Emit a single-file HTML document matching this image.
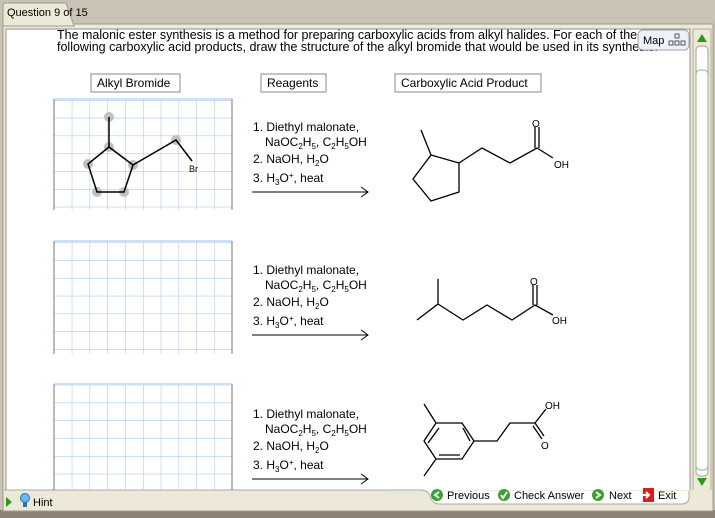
<!DOCTYPE html>
<html><head><meta charset="utf-8">
<style>
html,body{margin:0;padding:0;width:715px;height:518px;overflow:hidden;background:#c9c3b5;}
svg{display:block;font-family:"Liberation Sans",sans-serif;}
</style></head><body>
<svg width="715" height="518" viewBox="0 0 715 518" xmlns="http://www.w3.org/2000/svg">
<defs>
<pattern id="g" x="54" y="100" width="17.8" height="17.8" patternUnits="userSpaceOnUse">
<path d="M0 0H17.8M0 0V17.8" stroke="#9cc0ec" stroke-width="1" fill="none"/>
</pattern>
</defs>
<rect x="0" y="0" width="715" height="518" fill="#c9c3b5"/>
<rect x="0" y="510" width="715" height="8" fill="#8c8374"/>
<rect x="3" y="24" width="710" height="487" fill="#ece9d8" stroke="#a09a8c"/>
<path d="M3 26 V6 Q3 3 6 3 H66 L74 26 Z" fill="#ece9d8" stroke="#a09a8c"/>
<text x="7" y="16" font-size="11" fill="#000">Question 9 of 15</text>
<rect x="6" y="29" width="684" height="462" fill="#fff" stroke="#909090"/>
<rect x="693" y="29" width="18" height="462" fill="#ece9d8" stroke="#b0ac9c"/>
<path d="M697 42 L702 34 L707 42Z" fill="#2a9a1a"/>
<rect x="696" y="46" width="12" height="430" rx="4" fill="#fff" stroke="#a0a0a0"/>
<rect x="696" y="70" width="12" height="400" rx="4" fill="#fff" stroke="#8ab880"/>
<path d="M697 478 L702 486 L707 478Z" fill="#2a9a1a"/>
<rect x="4" y="490" width="708" height="20" fill="#ece9d8"/>
<path d="M4 490 H420 Q428 490 430 496 Q432 504 440 504 H682 Q688 504 689 498 V491" fill="#fff" stroke="#a8a8a8"/>
<path d="M6 497 L12 502 L6 507Z" fill="#2a9a1a"/>
<circle cx="25" cy="498" r="4.5" fill="#6ab8f0" stroke="#3070b0"/>
<rect x="23" y="502" width="4" height="5" fill="#3070b0"/>
<text x="33" y="506" font-size="11">Hint</text>
<circle cx="437" cy="495" r="6" fill="#3aa030"/><path d="M439 492 L435 495 L439 498" stroke="#fff" stroke-width="2" fill="none"/>
<text x="447" y="499" font-size="11">Previous</text>
<circle cx="504" cy="495" r="6" fill="#3aa030"/><path d="M501 495 L503 498 L507 492" stroke="#fff" stroke-width="2" fill="none"/>
<text x="514" y="499" font-size="11">Check Answer</text>
<circle cx="598" cy="495" r="6" fill="#3aa030"/><path d="M596 492 L600 495 L596 498" stroke="#fff" stroke-width="2" fill="none"/>
<text x="609" y="499" font-size="11">Next</text>
<rect x="643" y="488" width="11" height="14" fill="#d02020"/><path d="M641 495 H649 M646 492 L649 495 L646 498" stroke="#fff" stroke-width="2" fill="none"/>
<text x="658" y="499" font-size="11">Exit</text>
<text x="57" y="39" font-size="12.5">The malonic ester synthesis is a method for preparing carboxylic acids from alkyl halides. For each of the</text>
<text x="57" y="51" font-size="12.5">following carboxylic acid products, draw the structure of the alkyl bromide that would be used in its synthesis.</text>
<rect x="638" y="30" width="51" height="20" rx="5" fill="#eef2f8" stroke="#9aa4b0"/>
<text x="643" y="44" font-size="11">Map</text>
<g stroke="#333" fill="none" stroke-width="0.8"><rect x="675" y="34" width="4" height="4"/><rect x="669" y="41" width="4" height="4"/><rect x="675" y="41" width="4" height="4"/><rect x="681" y="41" width="4" height="4"/></g>
<g font-size="12" fill="#000">
<rect x="91" y="74" width="89" height="18" fill="#fff" stroke="#888"/><text x="97" y="87">Alkyl Bromide</text>
<rect x="261" y="74" width="65" height="18" fill="#fff" stroke="#888"/><text x="267" y="87">Reagents</text>
<rect x="395" y="74" width="146" height="18" fill="#fff" stroke="#888"/><text x="401" y="87">Carboxylic Acid Product</text>
</g>
<g>
<rect x="54" y="100" width="178" height="110" fill="url(#g)"/>
<path d="M54 99V210M232 99V210" stroke="#777" stroke-width="1"/>
<path d="M54 99H232" stroke="#9cc0ec"/>
<rect x="54" y="242" width="178" height="112" fill="url(#g)"/>
<path d="M54 241V354M232 241V354" stroke="#777"/>
<path d="M54 241H232" stroke="#9cc0ec"/>
<rect x="54" y="385" width="178" height="105" fill="url(#g)"/>
<path d="M54 384V490M232 384V490" stroke="#777"/>
<path d="M54 384H232" stroke="#9cc0ec"/>
</g>
<g fill="#c0c0c0"><circle cx="109" cy="117" r="5"/><circle cx="109" cy="147" r="5"/><circle cx="133" cy="165" r="5"/><circle cx="124" cy="192" r="5"/><circle cx="97" cy="192" r="5"/><circle cx="88" cy="164" r="5"/><circle cx="176" cy="140" r="5"/></g>
<path d="M109 117V147 M109 147L133 165L124 192H97L88 164Z M133 165L176 140L192 161" stroke="#000" stroke-width="1.5" fill="none"/>
<text x="189" y="172" font-size="9">Br</text>
<g font-size="12">
<g id="r1"><text x="253" y="131">1. Diethyl malonate,</text>
<text x="265" y="146">NaOC<tspan font-size="8" dy="3">2</tspan><tspan dy="-3">H</tspan><tspan font-size="8" dy="3">5</tspan><tspan dy="-3">, C</tspan><tspan font-size="8" dy="3">2</tspan><tspan dy="-3">H</tspan><tspan font-size="8" dy="3">5</tspan><tspan dy="-3">OH</tspan></text>
<text x="253" y="163">2. NaOH, H<tspan font-size="8" dy="3">2</tspan><tspan dy="-3">O</tspan></text>
<text x="253" y="182">3. H<tspan font-size="8" dy="3">3</tspan><tspan dy="-3">O</tspan><tspan font-size="8" dy="-4">+</tspan><tspan dy="4">, heat</tspan></text>
<path d="M252 192H368M361 187L368 192L361 197" stroke="#000" fill="none"/></g>
<use href="#r1" y="143"/>
<use href="#r1" y="287"/>
</g>
<g stroke="#000" stroke-width="1.3" fill="none">
<path d="M421 130L431 155 M431 155L459 163L459 192L431 201L413 179Z M459 163L482 148L510 163L537 148L553 158 M535 148V127 M539 148V127"/>
<path d="M438 279V304L417 320 M438 304L463 320L487 305L512 320L535 305L553 315 M533 305V285 M537 305V285"/>
<path d="M436 423H462L474 441L462 459H436L424 441Z M439 428L428 443 M439 455H460 M463 428L470 441 M436 423L424 404 M436 459L424 476 M474 441H497L510 423H535L546 409 M535 423L544 436 M533 426L542 439"/>
</g>
<g font-size="10">
<text x="532" y="127">O</text><text x="554" y="168">OH</text>
<text x="530" y="285">O</text><text x="552" y="324">OH</text>
<text x="545" y="409">OH</text><text x="541" y="449">O</text>
</g>
</svg>
</body></html>
